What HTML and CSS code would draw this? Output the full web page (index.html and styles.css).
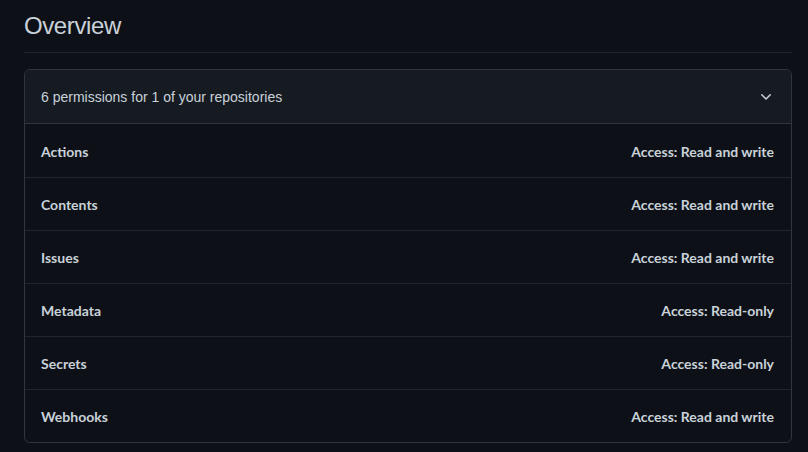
FILE: index.html
```html
<!DOCTYPE html>
<html>
<head>
<meta charset="utf-8">
<link rel="stylesheet" href="styles.css">
</head>
<body>
<div class="page">
  <h2 class="subhead">Overview</h2>
  <div class="box">
    <div class="box-header">
      <span>6 permissions for 1 of your repositories</span>
      <svg class="chev" width="16" height="16" viewBox="0 0 16 16"><path fill="currentColor" d="M12.78 5.22a.749.749 0 0 1 0 1.06l-4.25 4.25a.749.749 0 0 1-1.06 0L3.22 6.28a.749.749 0 1 1 1.06-1.06L8 8.939l3.72-3.719a.749.749 0 0 1 1.06 0Z"/></svg>
    </div>
    <div class="row"><span class="name">Actions</span><span class="access">Access: Read and write</span></div>
    <div class="row"><span class="name">Contents</span><span class="access">Access: Read and write</span></div>
    <div class="row"><span class="name">Issues</span><span class="access">Access: Read and write</span></div>
    <div class="row"><span class="name">Metadata</span><span class="access">Access: Read-only</span></div>
    <div class="row"><span class="name">Secrets</span><span class="access">Access: Read-only</span></div>
    <div class="row"><span class="name">Webhooks</span><span class="access">Access: Read and write</span></div>
  </div>
</div>
</body>
</html>
```
FILE: styles.css
```css
html, body {
  margin: 0;
  background: #0d1117;
  color: #c9d1d9;
  font-family: "Liberation Sans", Arial, sans-serif;
  font-size: 14px;
}
.page {
  padding: 8px 16px 0 24px;
}
.subhead {
  margin: 0;
  font-size: 24px;
  font-weight: 400;
  line-height: 36px;
  letter-spacing: -0.4px;
  padding-bottom: 8px;
  border-bottom: 1px solid #21262d;
  color: #c9d1d9;
}
.box {
  margin-top: 16px;
  border: 1px solid #30363d;
  border-radius: 6px;
  overflow: hidden;
}
.box-header {
  display: flex;
  align-items: center;
  justify-content: space-between;
  background: #161b22;
  padding: 17px 17px 16px 16px;
  line-height: 20px;
  border-bottom: 1px solid #30363d;
}
.chev {
  color: #c9d1d9;
  display: block;
}
.row {
  display: flex;
  justify-content: space-between;
  padding: 17px 17px 15px 16px;
  line-height: 20px;
  border-top: 1px solid #21262d;
  font-family: Lato, "Liberation Sans", sans-serif;
  font-weight: 700;
}
.box-header + .row {
  border-top: none;
  padding-top: 18px;
}
```
